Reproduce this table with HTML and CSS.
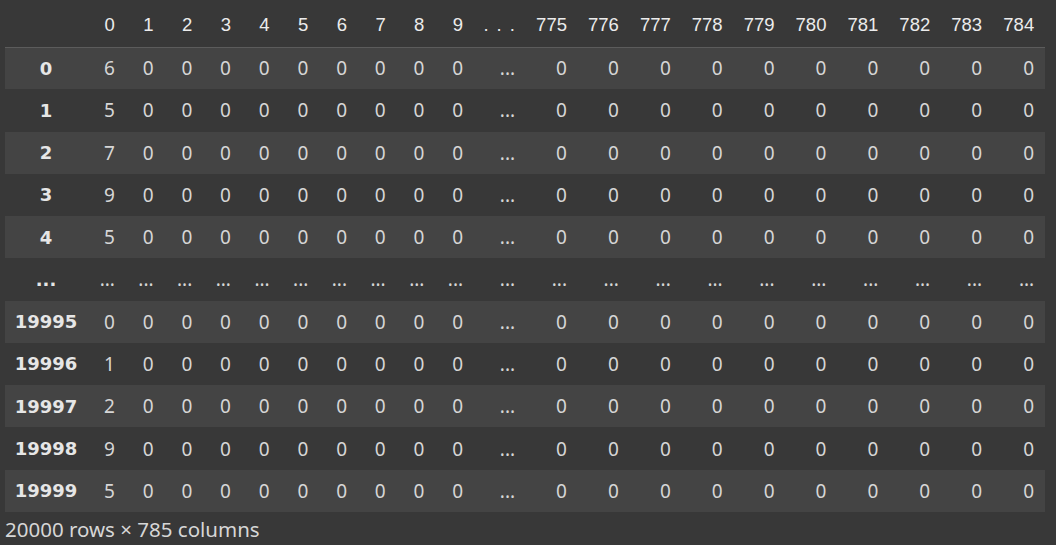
FILE: index.html
```html
<!DOCTYPE html>
<html>
<head>
<meta charset="utf-8">
<link rel="stylesheet" href="styles.css">
</head>
<body>
<div class="frame">
<table class="df">
<colgroup>
<col class="c-idx">
<col class="c-d"><col class="c-d"><col class="c-d"><col class="c-d"><col class="c-d"><col class="c-d"><col class="c-d"><col class="c-d"><col class="c-d"><col class="c-d">
<col class="c-e">
<col class="c-w"><col class="c-w"><col class="c-w"><col class="c-w"><col class="c-w"><col class="c-w"><col class="c-w"><col class="c-w"><col class="c-w"><col class="c-w">
</colgroup>
<thead>
<tr><th></th><th>0</th><th>1</th><th>2</th><th>3</th><th>4</th><th>5</th><th>6</th><th>7</th><th>8</th><th>9</th><th class="hdots">...</th><th>775</th><th>776</th><th>777</th><th>778</th><th>779</th><th>780</th><th>781</th><th>782</th><th>783</th><th>784</th></tr>
</thead>
<tbody>
<tr><th>0</th><td>6</td><td>0</td><td>0</td><td>0</td><td>0</td><td>0</td><td>0</td><td>0</td><td>0</td><td>0</td><td>...</td><td>0</td><td>0</td><td>0</td><td>0</td><td>0</td><td>0</td><td>0</td><td>0</td><td>0</td><td>0</td></tr>
<tr><th>1</th><td>5</td><td>0</td><td>0</td><td>0</td><td>0</td><td>0</td><td>0</td><td>0</td><td>0</td><td>0</td><td>...</td><td>0</td><td>0</td><td>0</td><td>0</td><td>0</td><td>0</td><td>0</td><td>0</td><td>0</td><td>0</td></tr>
<tr><th>2</th><td>7</td><td>0</td><td>0</td><td>0</td><td>0</td><td>0</td><td>0</td><td>0</td><td>0</td><td>0</td><td>...</td><td>0</td><td>0</td><td>0</td><td>0</td><td>0</td><td>0</td><td>0</td><td>0</td><td>0</td><td>0</td></tr>
<tr><th>3</th><td>9</td><td>0</td><td>0</td><td>0</td><td>0</td><td>0</td><td>0</td><td>0</td><td>0</td><td>0</td><td>...</td><td>0</td><td>0</td><td>0</td><td>0</td><td>0</td><td>0</td><td>0</td><td>0</td><td>0</td><td>0</td></tr>
<tr><th>4</th><td>5</td><td>0</td><td>0</td><td>0</td><td>0</td><td>0</td><td>0</td><td>0</td><td>0</td><td>0</td><td>...</td><td>0</td><td>0</td><td>0</td><td>0</td><td>0</td><td>0</td><td>0</td><td>0</td><td>0</td><td>0</td></tr>
<tr><th>...</th><td>...</td><td>...</td><td>...</td><td>...</td><td>...</td><td>...</td><td>...</td><td>...</td><td>...</td><td>...</td><td>...</td><td>...</td><td>...</td><td>...</td><td>...</td><td>...</td><td>...</td><td>...</td><td>...</td><td>...</td><td>...</td></tr>
<tr><th>19995</th><td>0</td><td>0</td><td>0</td><td>0</td><td>0</td><td>0</td><td>0</td><td>0</td><td>0</td><td>0</td><td>...</td><td>0</td><td>0</td><td>0</td><td>0</td><td>0</td><td>0</td><td>0</td><td>0</td><td>0</td><td>0</td></tr>
<tr><th>19996</th><td>1</td><td>0</td><td>0</td><td>0</td><td>0</td><td>0</td><td>0</td><td>0</td><td>0</td><td>0</td><td>...</td><td>0</td><td>0</td><td>0</td><td>0</td><td>0</td><td>0</td><td>0</td><td>0</td><td>0</td><td>0</td></tr>
<tr><th>19997</th><td>2</td><td>0</td><td>0</td><td>0</td><td>0</td><td>0</td><td>0</td><td>0</td><td>0</td><td>0</td><td>...</td><td>0</td><td>0</td><td>0</td><td>0</td><td>0</td><td>0</td><td>0</td><td>0</td><td>0</td><td>0</td></tr>
<tr><th>19998</th><td>9</td><td>0</td><td>0</td><td>0</td><td>0</td><td>0</td><td>0</td><td>0</td><td>0</td><td>0</td><td>...</td><td>0</td><td>0</td><td>0</td><td>0</td><td>0</td><td>0</td><td>0</td><td>0</td><td>0</td><td>0</td></tr>
<tr><th>19999</th><td>5</td><td>0</td><td>0</td><td>0</td><td>0</td><td>0</td><td>0</td><td>0</td><td>0</td><td>0</td><td>...</td><td>0</td><td>0</td><td>0</td><td>0</td><td>0</td><td>0</td><td>0</td><td>0</td><td>0</td><td>0</td></tr>
</tbody>
</table>
<p class="shape">20000 rows × 785 columns</p>
</div>
</body>
</html>
```
FILE: styles.css
```css
html, body {
  margin: 0;
  padding: 0;
  background: #383838;
}
.frame {
  padding: 0 0 0 5px;
  font-family: "Noto Sans", "DejaVu Sans", sans-serif;
  color: #d6d6d6;
}
.df {
  border-collapse: collapse;
  table-layout: fixed;
  width: 1040px;
}
.c-idx { width: 82px; }
.c-d { width: 38.7px; }
.c-e { width: 52px; }
.c-w { width: 51.9px; }
.df thead th {
  height: 47px;
  padding: 4px 10.8px 0 0;
  border-bottom: 1px solid #5c5c5c;
  text-align: right;
  font-family: "Liberation Sans", sans-serif;
  font-weight: normal;
  font-size: 18.5px;
  color: #ececec;
  vertical-align: middle;
  box-sizing: border-box;
}
.df thead th.hdots {
  letter-spacing: 8px;
  padding-right: 3px;
}
.df tbody tr {
  height: 42.27px;
}
.df tbody tr:nth-child(odd) {
  background: #444444;
}
.df tbody td {
  padding: 0 10.8px 0 0;
  text-align: right;
  font-size: 19px;
  vertical-align: middle;
  white-space: nowrap;
}
.df tbody th {
  padding: 0;
  text-align: center;
  font-family: "DejaVu Sans", sans-serif;
  font-weight: bold;
  font-size: 18px;
  color: #e6e6e6;
  vertical-align: middle;
}
.shape {
  margin: 3px 0 0 0;
  font-size: 20.5px;
  line-height: 28px;
  color: #d6d6d6;
}
```
